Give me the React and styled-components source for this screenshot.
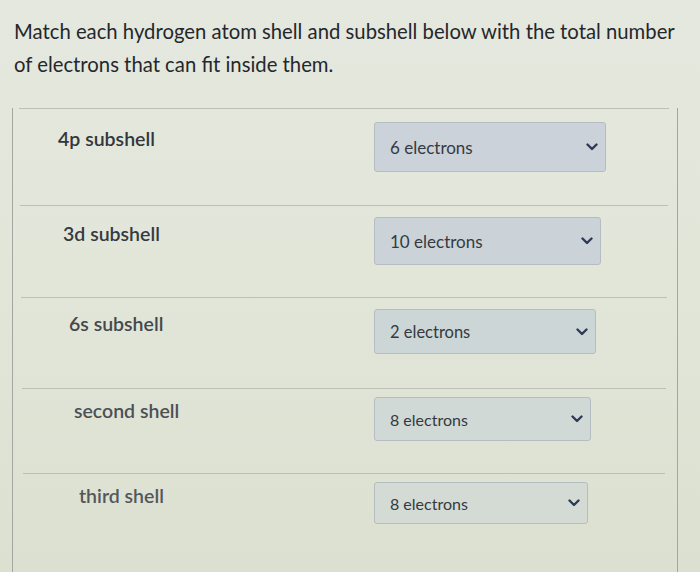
import React from 'react'
import styled, { createGlobalStyle } from 'styled-components'

// the photo was taken at an angle, so each row sits a little further in and shrinks
const ROWS = [
  { label: '4p subshell', value: '6 electrons', indent: 40, height: 97, top: 13, lift: 5, w: 232, h: 50, size: 17, ink: '#33363c', fill: '#cbd2d9' },
  { label: '3d subshell', value: '10 electrons', indent: 45, height: 92, top: 11, lift: 5, w: 227, h: 48, size: 17, ink: '#363a40', fill: '#cbd3d8' },
  { label: '6s subshell', value: '2 electrons', indent: 51, height: 91, top: 11, lift: 3, w: 222, h: 45, size: 16.5, ink: '#44484d', fill: '#cdd6d6' },
  { label: 'second shell', value: '8 electrons', indent: 56, height: 85, top: 8, lift: 2, w: 217, h: 44, size: 16, ink: '#4c5055', fill: '#d0d9d5' },
  { label: 'third shell', value: '8 electrons', indent: 61, height: 99, top: 8, lift: 2, w: 214, h: 42, size: 16, ink: '#53575b', fill: '#d3dbd4' },
]

function Chevron() {
  return (
    <svg width="12" height="8" viewBox="0 0 12 8">
      <path d="M1.5 1.5 L6 6 L10.5 1.5" fill="none" stroke="#2f3a58" strokeWidth="2.4" strokeLinecap="round" strokeLinejoin="round" />
    </svg>
  )
}

function App() {
  return (
    <>
      <Global />
      <Page>
        <Prompt>
          Match each hydrogen atom shell and subshell below with the total number of electrons that can fit inside them.
        </Prompt>
        <Board>
          { ROWS.map((row, index) => (
            <Row key={index} indent={row.indent} height={row.height} top={row.top} w={row.w}>
              <Label ink={row.ink} lift={row.lift}>{ row.label }</Label>
              <Select h={row.h} fill={row.fill}>
                <Value size={row.size}>{ row.value }</Value>
                <Chevron />
              </Select>
            </Row>
          )) }
        </Board>
      </Page>
    </>
  )
}

const Global = createGlobalStyle`
  html, body {
    margin: 0;
    height: 100%;
  }
  body {
    background: linear-gradient(180deg, #e5e8de 0%, #e2e6d9 50%, #dce0d0 100%);
    font-family: Lato, "Open Sans", sans-serif;
    overflow: hidden;
  }
`

const Page = styled.div`
  width: 700px;
  height: 572px;
  padding-top: 15px;
  box-sizing: border-box;
  display: flex;
  flex-direction: column;
`

const Prompt = styled.p`
  margin: 0;
  padding: 0 16px 0 14px;
  font-size: 20.3px;
  line-height: 33px;
  color: #24272c;
`

const Board = styled.div`
  flex: 1;
  margin: 27px 22px 0 12px;
  border-left: 1px solid #a3a79f;
  border-right: 1px solid #a3a79f;
`

// board content starts at x=13; labels sit at 18 + indent, selects always at x=374
const Row = styled.div.withConfig({ shouldForwardProp: p => !['indent', 'height', 'top', 'w'].includes(p) })`
  display: grid;
  grid-template-columns: ${props => 356 - props.indent}px ${props => props.w}px;
  align-items: start;
  height: ${props => props.height}px;
  margin: 0 ${props => props.indent / 5}px 0 ${props => props.indent / 5 - 2}px;
  padding: ${props => props.top}px 0 0 ${props => 7 + props.indent - props.indent / 5}px;
  box-sizing: border-box;
  border-top: 1px solid #bcc0b6;
`

const Label = styled.div.withConfig({ shouldForwardProp: p => !['ink', 'lift'].includes(p) })`
  padding-top: ${props => props.lift}px;
  font-size: 19.5px;
  font-weight: 600;
  color: ${props => props.ink};
`

const Select = styled.div.withConfig({ shouldForwardProp: p => !['h', 'fill'].includes(p) })`
  display: flex;
  align-items: center;
  justify-content: space-between;
  height: ${props => props.h}px;
  padding: 0 7px 0 15px;
  box-sizing: border-box;
  background: ${props => props.fill};
  border: 1px solid #b6bdc2;
  border-radius: 3px;
`

const Value = styled.span.withConfig({ shouldForwardProp: p => p !== 'size' })`
  font-size: ${props => props.size}px;
  color: #343a40;
`

export default App
